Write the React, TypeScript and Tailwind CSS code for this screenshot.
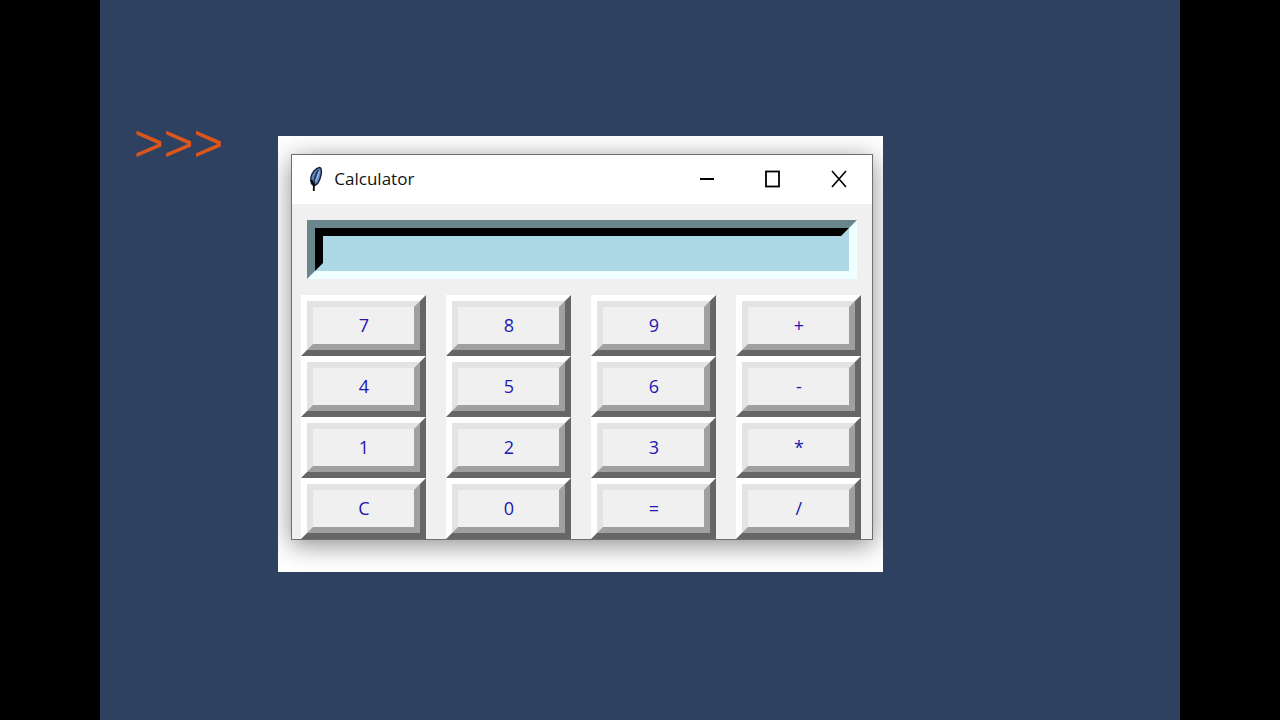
import React, { useState } from 'react';

const KEYS = [
  '7', '8', '9', '+',
  '4', '5', '6', '-',
  '1', '2', '3', '*',
  'C', '0', '=', '/',
];

const OPERATORS = ['+', '-', '*', '/'];

const calculate = (expression: string) => {
  const match = expression.match(/^(-?[\d.]+)([-+*/])([\d.]+)$/);
  if (!match) return expression;

  const a = Number(match[1]);
  const b = Number(match[3]);
  switch (match[2]) {
    case '+':
      return String(a + b);
    case '-':
      return String(a - b);
    case '*':
      return String(a * b);
    default:
      return b === 0 ? '' : String(a / b);
  }
};

const FeatherIcon = () => (
  <svg width="16" height="26" viewBox="0 0 16 26" aria-hidden="true">
    <path d="M11.5 1.5 C13.6 2 13.8 5 13 9 C12 14 9.5 18.5 6.5 19.5 C4 19 2.4 16 2.8 12 C3.6 7 7.5 2 11.5 1.5 Z" fill="#6286ba" />
    <path d="M11.5 1.5 C13.6 2 13.8 5 13 9 C12 14 9.5 18.5 6.5 19.5 C4 19 2.4 16 2.8 12 C3.6 7 7.5 2 11.5 1.5 Z" fill="none" stroke="#14233d" strokeWidth="1.4" />
    <path d="M10.5 4 C7.5 8 6 13 6 20" fill="none" stroke="#1d3258" strokeWidth="1.6" />
    <path d="M11.2 5 C10.5 9 9.3 12 7.6 15.5" fill="none" stroke="#a6c0e4" strokeWidth="1.2" />
    <path d="M3.4 14 L5.8 19 L5.8 25" fill="none" stroke="#000" strokeWidth="1.8" />
  </svg>
);

type KeyButtonProps = {
  label: string;
  onPress: (label: string) => void;
};

const KeyButton: React.FC<KeyButtonProps> = ({ label, onPress }) => (
  <button
    type="button"
    onClick={() => onPress(label)}
    className="flex h-[61px] border-6 border-t-white border-l-white border-r-[#666666] border-b-[#666666]"
  >
    <span className="flex-1 self-stretch flex items-center justify-center pb-0.5 border-6 border-t-[#e3e3e3] border-l-[#e3e3e3] border-r-[#a0a0a0] border-b-[#a0a0a0] bg-[#f0f0f0] text-lg leading-6 text-[#2118b0]">
      {label}
    </span>
  </button>
);

const TitleBar = () => (
  <div className="flex items-center h-[49px] bg-white pb-0.5 pl-4 pr-6">
    <FeatherIcon />
    <h1 className="ml-[10px] text-[17px] leading-6 text-[#111111]">Calculator</h1>
    <div className="ml-auto flex items-center gap-12">
      <button type="button" aria-label="Minimize">
        <svg width="18" height="18" viewBox="0 0 18 18" className="block">
          <path d="M2 9 H16" stroke="#000" strokeWidth="2" />
        </svg>
      </button>
      <button type="button" aria-label="Maximize">
        <svg width="18" height="18" viewBox="0 0 18 18" className="block">
          <rect x="2" y="1.5" width="13" height="15" fill="none" stroke="#000" strokeWidth="1.8" />
        </svg>
      </button>
      <button type="button" aria-label="Close">
        <svg width="18" height="18" viewBox="0 0 18 18" className="block">
          <path d="M2 1 L16 17 M16 1 L2 17" stroke="#000" strokeWidth="1.6" />
        </svg>
      </button>
    </div>
  </div>
);

const Calculator = () => {
  const [expression, setExpression] = useState('');

  const handlePress = (label: string) => {
    if (label === 'C') {
      setExpression('');
    } else if (label === '=') {
      setExpression(prev => calculate(prev));
    } else if (OPERATORS.includes(label)) {
      setExpression(prev => calculate(prev) + label);
    } else {
      setExpression(prev => prev + label);
    }
  };

  return (
    <div className="border border-[#6e6e6e] bg-[#f0f0f0] shadow-[0_5px_24px_rgba(0,0,0,0.45)]">
      <TitleBar />

      {/* Sunken entry field */}
      <div className="mx-[15px] my-4 border-8 border-t-[#68868c] border-l-[#68868c] border-r-[#f0ffff] border-b-[#f0ffff]">
        <input
          type="text"
          aria-label="Expression"
          value={expression}
          onChange={(e) => setExpression(e.target.value)}
          className="block w-full h-[43px] border-8 border-t-black border-l-black border-r-[#add8e6] border-b-[#add8e6] bg-[#add8e6] text-lg leading-6 text-black outline-none"
        />
      </div>

      {/* Keypad */}
      <div className="grid grid-cols-4 gap-x-5 pl-[9px] pr-[11px]">
        {KEYS.map((key) => (
          <KeyButton key={key} label={key} onPress={handlePress} />
        ))}
      </div>
    </div>
  );
};

const App = () => {
  return (
    <div className="flex min-h-screen bg-black px-[100px] font-['Open_Sans','Noto_Sans',sans-serif]">
      <main className="flex flex-1 items-start gap-[55px] bg-[#2f4160] pl-[34px] pt-[136px]">
        <p className="-mt-6 text-[51px] leading-[64px] text-[#d9561c] font-['Liberation_Sans',sans-serif]">
          &gt;&gt;&gt;
        </p>
        <div className="flex-1 max-w-[605px] overflow-hidden bg-white pt-[18px] pr-[10px] pb-8 pl-[13px]">
          <Calculator />
        </div>
      </main>
    </div>
  );
};

export default App;
